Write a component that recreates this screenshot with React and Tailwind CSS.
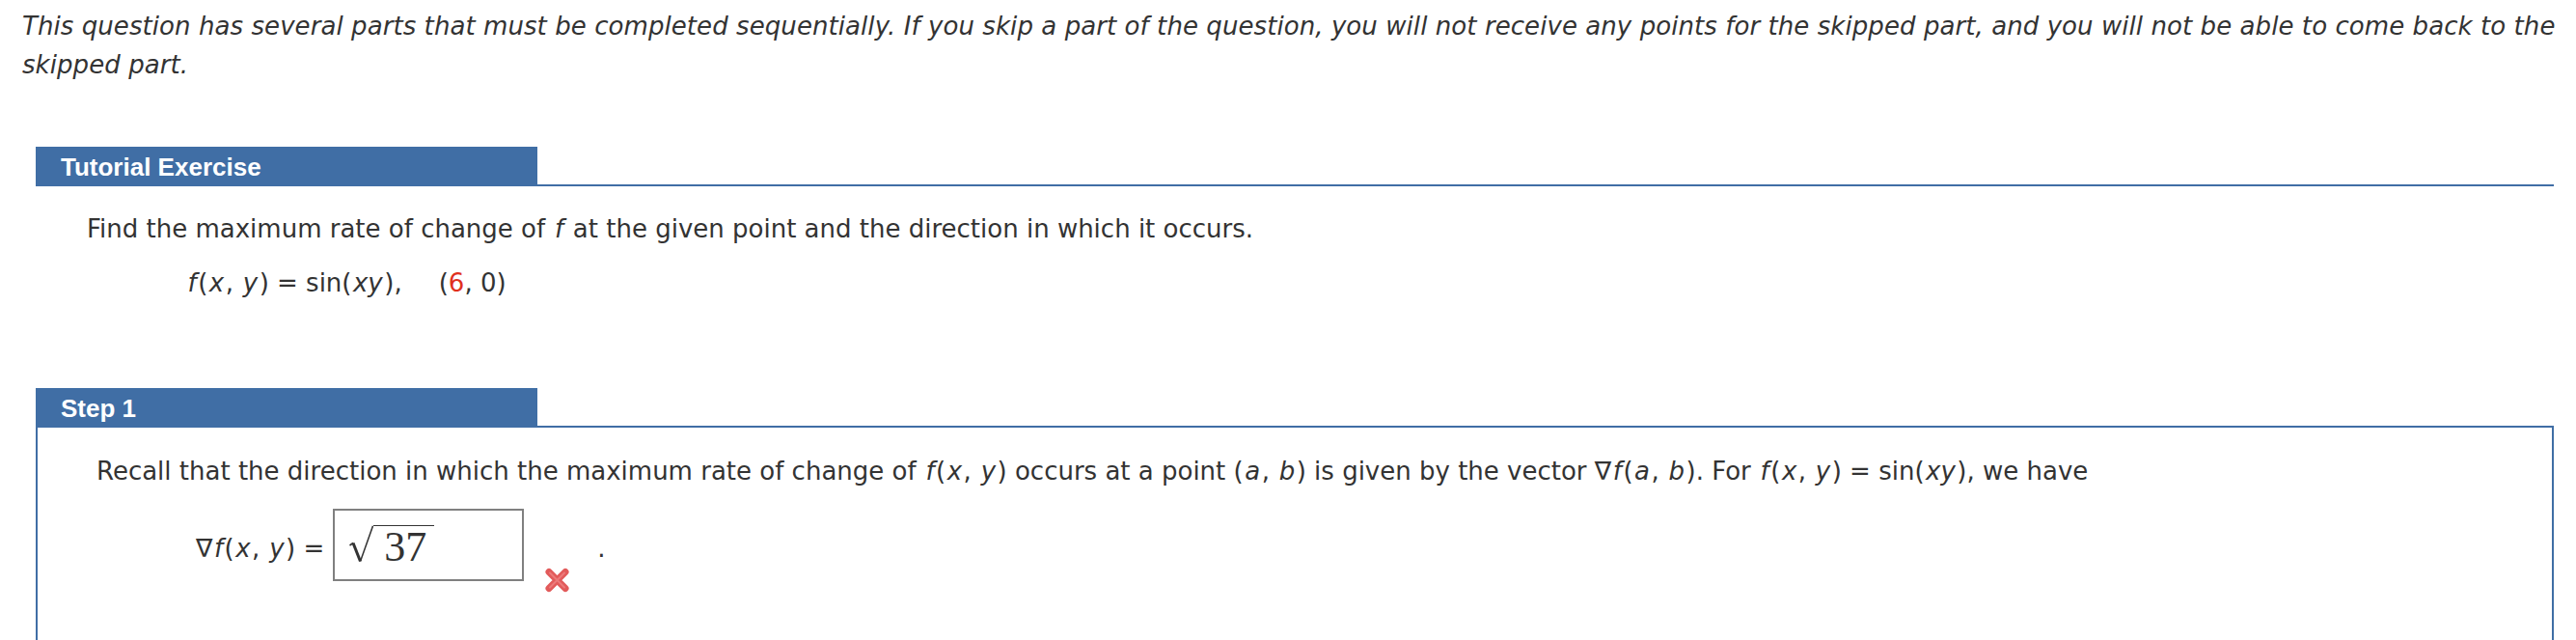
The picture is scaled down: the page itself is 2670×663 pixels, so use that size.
import React from "react";

const BLUE = "#406ea5";

// italic math variable, a touch of extra room like the original math spans
const V = ({ children }) => <i className="px-[1.5px]">{children}</i>;

function Radical() {
  return (
    <svg width="25" height="40" viewBox="0 0 25 40" className="shrink-0">
      <path d="M0.5 21 L4 18.5" stroke="#333" strokeWidth="1.6" fill="none" />
      <path d="M4 18.5 L11.5 37.5" stroke="#333" strokeWidth="3" fill="none" />
      <path d="M11.5 37.5 L24.5 0.8" stroke="#333" strokeWidth="1.5" fill="none" />
    </svg>
  );
}

function WrongMark() {
  return (
    <svg width="27" height="26" viewBox="0 0 27 26" className="shrink-0">
      <path d="M5 4.5 L22 21.5 M22 4.5 L5 21.5" stroke="#e25a5a" strokeWidth="7" strokeLinecap="round" />
      <path d="M6 5.5 L21 20.5 M21 5.5 L6 20.5" stroke="#ec7a7a" strokeWidth="2" strokeLinecap="round" />
    </svg>
  );
}

function Header({ title }) {
  return (
    <div className="flex border-b-2" style={{ borderColor: BLUE }}>
      <div className="h-[39px] w-[520px] bg-[#406ea5] pl-[26px] flex items-center pt-[2px] text-white font-bold text-[26px] font-['Liberation_Sans',Arial,sans-serif]">
        {title}
      </div>
    </div>
  );
}

export default function App() {
  return (
    <div className="min-h-screen bg-white px-[23px] text-[#333] font-['DejaVu_Sans',Verdana,sans-serif] text-[26px] leading-[40px]">
      {/* note at top */}
      <p className="pt-[7px] italic -mr-[16px] tracking-[0.07px]">
        This question has several parts that must be completed sequentially. If you skip a part of the question, you will not receive any points for the skipped part, and you will not be able to come back to the skipped part.
      </p>

      {/* tutorial exercise */}
      <section className="ml-[14px] mt-[65px]">
        <Header title="Tutorial Exercise" />
        <div className="pl-[53px] pt-[24px]">
          <p>
            Find the maximum rate of change of <V>f</V> at the given point and the direction in which it occurs.
          </p>
          <p className="ml-[103px] mt-[16px]">
            <V>f</V>(<V>x</V>, <V>y</V>) = sin(<V>xy</V>),
            <span className="ml-[38px]">
              (<span className="text-[#e0301e]">6</span>, 0)
            </span>
          </p>
        </div>
      </section>

      {/* step 1 */}
      <section className="ml-[14px] mt-[89px]">
        <Header title="Step 1" />
        <div className="border-x-2 border-[#406ea5] pl-[61px] pt-[25px] pb-[120px]">
          <p className="whitespace-nowrap">
            Recall that the direction in which the maximum rate of change of <V>f</V>(<V>x</V>, <V>y</V>) occurs at a point (<V>a</V>, <V>b</V>) is given by the vector ∇<V>f</V>(<V>a</V>, <V>b</V>). For <V>f</V>(<V>x</V>, <V>y</V>) = sin(<V>xy</V>), we have
          </p>
          <div className="flex items-start mt-[19px] ml-[103px]">
            <span className="mt-[21px] whitespace-nowrap">
              ∇<V>f</V>(<V>x</V>, <V>y</V>) =
            </span>
            <div className="ml-[9px] w-[198px] h-[75px] border-2 border-[#808080] flex items-start pl-[15px] pt-[15px]">
              <Radical />
              <span className="border-t-[1.5px] border-[#333] pl-[11px] pr-[8px] leading-none text-[44px] font-['Liberation_Serif','Times_New_Roman',serif]">
                37
              </span>
            </div>
            <div className="ml-[21px] mt-[61px]">
              <WrongMark />
            </div>
            <span className="ml-[28px] mt-[21px]">.</span>
          </div>
        </div>
      </section>
    </div>
  );
}
